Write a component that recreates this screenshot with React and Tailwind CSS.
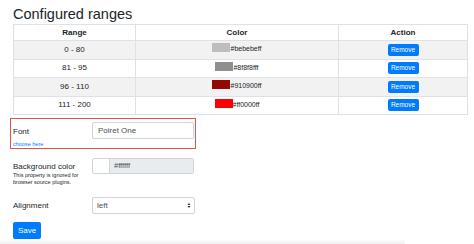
import React from "react";

const rows = [
  { range: "0 - 80", color: "#bebebe", hex: "#bebebeff" },
  { range: "81 - 95", color: "#8f8f8f", hex: "#8f8f8fff" },
  { range: "96 - 110", color: "#910900", hex: "#910900ff" },
  { range: "111 - 200", color: "#ff0000", hex: "#ff0000ff" },
];

export default function App() {
  return (
    <div
      className="w-[474px] h-[244px] bg-white overflow-hidden text-[#212529] flex flex-col"
      style={{ fontFamily: '"Liberation Sans", Arial, sans-serif' }}
    >
      <div className="pl-[13px] pr-[7px]">
        <h2 className="text-[14.5px] leading-[16px] pt-[6px] h-[24px] font-normal">Configured ranges</h2>
        <table className="w-[454px] table-fixed border-collapse border border-[#dee2e6] text-[8px]">
          <colgroup>
            <col className="w-[122px]" />
            <col className="w-[203px]" />
            <col className="w-[129px]" />
          </colgroup>
          <thead>
            <tr className="h-[16px]">
              <th className="border border-[#dee2e6] font-bold text-center align-middle">Range</th>
              <th className="border border-[#dee2e6] font-bold text-center align-middle">Color</th>
              <th className="border border-[#dee2e6] font-bold text-center align-middle">Action</th>
            </tr>
          </thead>
          <tbody>
            {rows.map((r, i) => (
              <tr key={r.range} className={i % 2 === 0 ? "h-[18.5px] bg-[#f2f2f2]" : "h-[18.5px] bg-white"}>
                <td className="border border-[#dee2e6] text-center align-middle">{r.range}</td>
                <td className="border border-[#dee2e6] text-center align-middle">
                  <span className="inline-flex items-end">
                    <span className="inline-block w-[18px] h-[9px]" style={{ backgroundColor: r.color }} />
                    <span className="text-[7px] leading-[7px]">{r.hex}</span>
                  </span>
                </td>
                <td className="border border-[#dee2e6] text-center align-middle">
                  <button className="bg-[#007bff] text-white text-[6.5px] leading-[12px] h-[12px] w-[31px] rounded-[2px]">
                    Remove
                  </button>
                </td>
              </tr>
            ))}
          </tbody>
        </table>

        <div className="mt-[3px] ml-[-3px] w-[186px] h-[31px] border border-[#e0524c] flex pl-[2px]">
          <div className="w-[79px] flex flex-col pt-[8px]">
            <span className="text-[8px] leading-[9px]">Font</span>
            <span className="text-[5.5px] leading-[6px] mt-[5px] text-[#007bff]">choose here</span>
          </div>
          <div className="pt-[3px]">
            <div className="w-[102px] h-[17px] border border-[#ced4da] rounded-[2px] bg-white text-[8px] leading-[15px] pl-[5px] text-[#495057]">
              Poiret One
            </div>
          </div>
        </div>

        <div className="flex mt-[9px]">
          <div className="w-[79px] flex flex-col pt-[4px]">
            <span className="text-[8px] leading-[9px]">Background color</span>
            <span className="text-[5.5px] leading-[6.5px] mt-[1px]">This property is ignored for</span>
            <span className="text-[5.5px] leading-[6.5px]">browser source plugins.</span>
          </div>
          <div className="flex w-[102px] h-[16px] border border-[#ced4da] rounded-[2px] overflow-hidden">
            <div className="w-[17px] h-full bg-white border-r border-[#ced4da]" />
            <div className="flex-1 bg-[#e9ecef] text-[7.5px] leading-[14px] pl-[4px] text-[#495057]">#ffffff</div>
          </div>
        </div>

        <div className="flex mt-[12px] items-center">
          <div className="w-[79px] text-[8px] leading-[9px]">Alignment</div>
          <div className="w-[103px] h-[17px] border border-[#ced4da] rounded-[2px] bg-white flex items-center justify-between pl-[4px] pr-[3px] text-[#495057]">
            <span className="text-[8px] leading-[15px]">left</span>
            <svg width="4" height="7" viewBox="0 0 4 7">
              <path d="M0.5 3 L2 1 L3.5 3 Z" fill="#343a40" />
              <path d="M0.5 4 L2 6 L3.5 4 Z" fill="#343a40" />
            </svg>
          </div>
        </div>

        <button className="mt-[8px] w-[28px] h-[17px] bg-[#007bff] text-white text-[8px] leading-[17px] rounded-[2px] block">
          Save
        </button>
      </div>
      <div className="w-[405px] h-[5px] bg-gradient-to-b from-white to-[#f0f0f0]" />
    </div>
  );
}
